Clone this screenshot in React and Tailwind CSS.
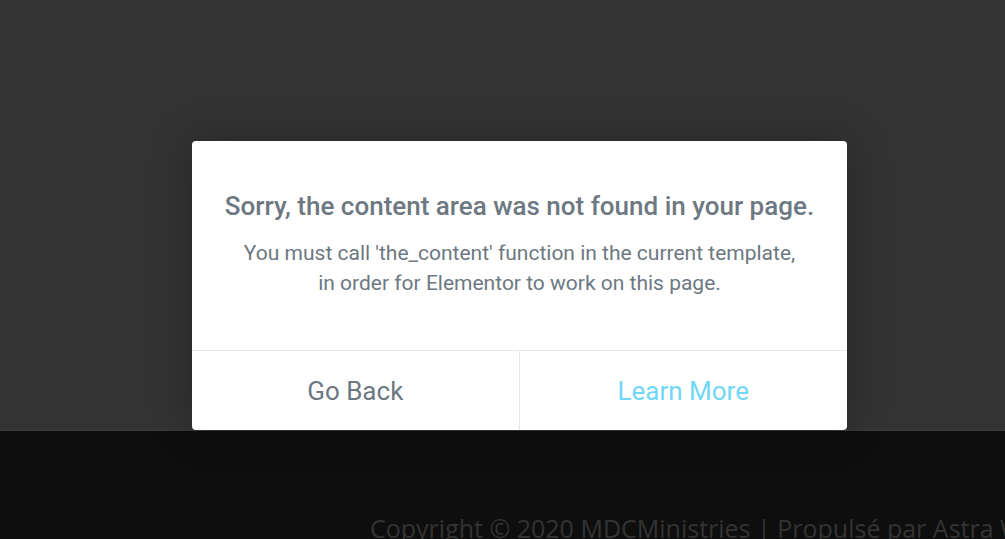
export default function App() {
  return (
    <div className="relative w-[1005px] h-[539px] overflow-hidden bg-[#0e0e0e]">
      <div className="h-[431px] bg-[#333333] border-b border-[#3a3a3a]" />
      <div className="h-[108px] bg-[#0e0e0e] overflow-hidden">
        <div
          className="pl-[370px] pt-[79px] whitespace-nowrap text-[25px] leading-[36px] text-[#333333]"
          style={{ fontFamily: '"Open Sans", sans-serif' }}
        >
          Copyright © 2020 MDCMinistries | Propulsé par Astra WordPress Theme
        </div>
      </div>

      <div
        className="absolute left-[192px] top-[141px] w-[655px] h-[289px] bg-white rounded-[4px] flex flex-col shadow-[0_0_40px_rgba(0,0,0,0.25)]"
        style={{ fontFamily: 'Roboto, sans-serif' }}
      >
        <div className="h-[209px] pt-[50px] flex flex-col items-center text-center text-[#6d7882]">
          <div className="text-[26px] leading-[30px] font-medium">
            Sorry, the content area was not found in your page.
          </div>
          <div className="mt-[17px] text-[21px] leading-[30px]">
            You must call 'the_content' function in the current template,
            <br />
            in order for Elementor to work on this page.
          </div>
        </div>
        <div className="flex-1 flex border-t border-[#e6e9ec]">
          <div className="w-1/2 pt-[2px] flex items-center justify-center text-[26px] text-[#6d7882] border-r border-[#e6e9ec]">
            Go Back
          </div>
          <div className="w-1/2 pt-[2px] flex items-center justify-center text-[26px] text-[#71d7f7]">
            Learn More
          </div>
        </div>
      </div>
    </div>
  );
}
